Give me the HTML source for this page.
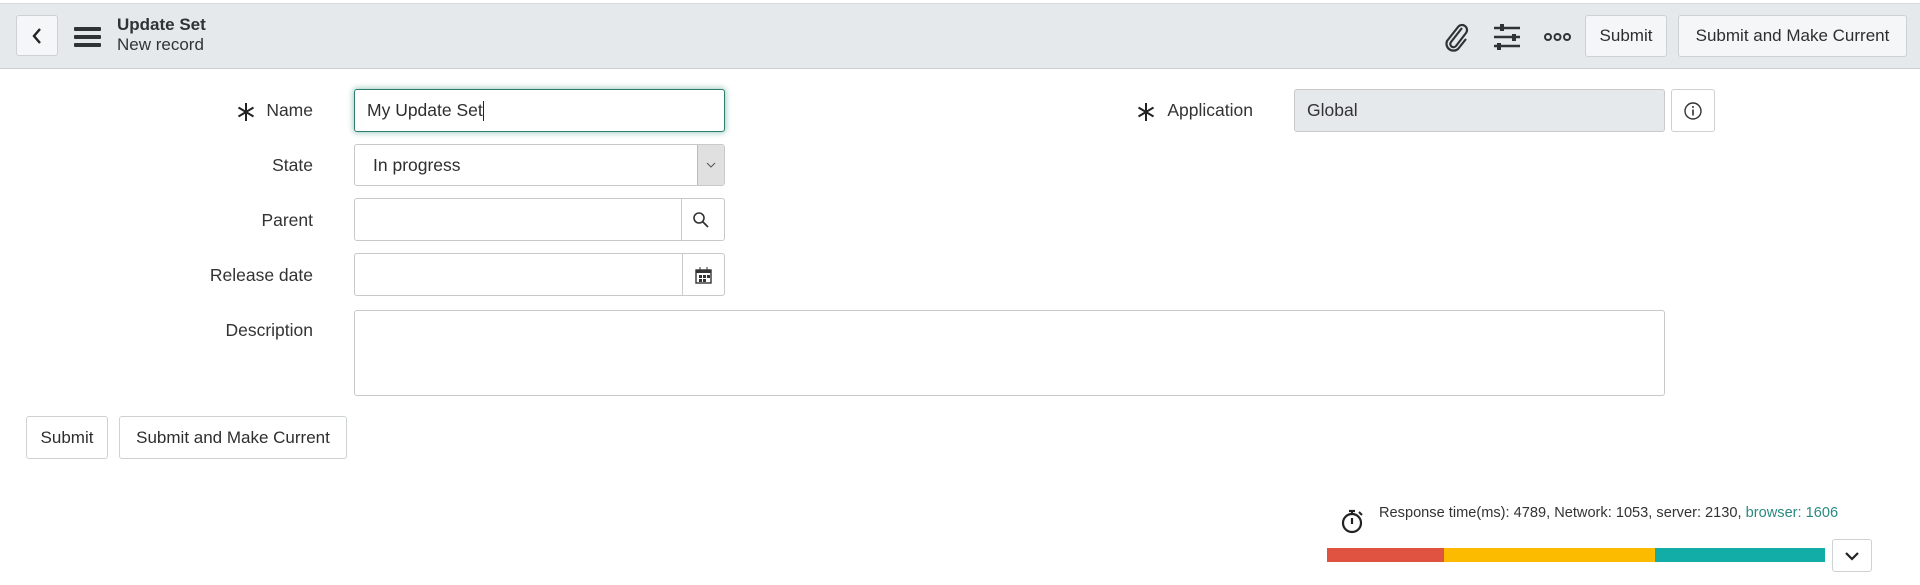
<!DOCTYPE html>
<html><head><style>
*{box-sizing:border-box;margin:0;padding:0}
body{width:1920px;height:585px;background:#fff;font-family:"Liberation Sans",Arial,sans-serif;color:#2e2e2e;position:relative;overflow:hidden}
.a{position:absolute}
.hdr{left:0;top:3px;width:1920px;height:66px;background:#e6e9eb;border-top:1px solid #d8dbde;border-bottom:1px solid #c9cdd1}
.btn{position:absolute;background:#f5f6f7;border:1px solid #cdd1d4;border-radius:3px;font-size:17px;color:#2e2e2e;display:flex;align-items:center;justify-content:center}
.wbtn{background:#fff}
.lbl{position:absolute;font-size:17.5px;color:#333;text-align:right}
.inp{position:absolute;border:1px solid #c7c9cb;border-radius:3px;background:#fff;font-size:17.5px;display:flex;align-items:center}
</style></head><body>
<div class="a hdr"></div>
<div class="btn" style="left:16px;top:15px;width:42px;height:41px"><svg width="14" height="20" viewBox="0 0 14 20"><path d="M10 3 L4 10 L10 17" fill="none" stroke="#222" stroke-width="2.4"/></svg></div>
<div class="a" style="left:74px;top:27px;width:27px;height:4px;background:#2f3338;border-radius:1px"></div>
<div class="a" style="left:74px;top:35px;width:27px;height:4px;background:#2f3338;border-radius:1px"></div>
<div class="a" style="left:74px;top:43px;width:27px;height:4px;background:#2f3338;border-radius:1px"></div>
<div class="a" style="left:117px;top:15px;font-size:17px;font-weight:bold;color:#2f3338">Update Set</div>
<div class="a" style="left:117px;top:35px;font-size:17px;color:#2f3338">New record</div>
<svg class="a" style="left:1442px;top:22px" width="28" height="30" viewBox="0 0 28 30"><path d="M20 6 L9 20 a3 3 0 0 0 5 4 L24 11 a5 5 0 0 0-8-6 L5 19 a7 7 0 0 0 11 8 L24 17" fill="none" stroke="#2f3338" stroke-width="2.2"/></svg>
<svg class="a" style="left:1492px;top:22px" width="30" height="30" viewBox="0 0 30 30"><g stroke="#2f3338" stroke-width="2.4"><line x1="2" y1="6" x2="28" y2="6"/><line x1="2" y1="15" x2="28" y2="15"/><line x1="2" y1="24" x2="28" y2="24"/></g><rect x="8" y="2" width="4" height="7" fill="#2f3338"/><rect x="20" y="12" width="4" height="7" fill="#2f3338"/><rect x="5" y="21" width="4" height="7" fill="#2f3338"/></svg>
<svg class="a" style="left:1543px;top:32px" width="29" height="10" viewBox="0 0 29 10"><g fill="none" stroke="#2f3338" stroke-width="2"><circle cx="5" cy="5" r="3"/><circle cx="14.5" cy="5" r="3"/><circle cx="24" cy="5" r="3"/></g></svg>
<div class="btn" style="left:1585px;top:15px;width:82px;height:42px">Submit</div>
<div class="btn" style="left:1678px;top:15px;width:229px;height:42px">Submit and Make Current</div>

<svg class="a" style="left:237px;top:103px" width="18" height="18" viewBox="0 0 18 18"><g stroke="#222" stroke-width="2"><line x1="9" y1="0" x2="9" y2="18"/><line x1="1.5" y1="4.5" x2="16.5" y2="13.5"/><line x1="1.5" y1="13.5" x2="16.5" y2="4.5"/></g></svg>
<div class="lbl" style="left:200px;top:100px;width:113px">Name</div>
<div class="inp" style="left:354px;top:89px;width:371px;height:43px;border:1px solid #2e7d6e;box-shadow:0 0 6px 1px rgba(40,140,120,.45);padding-left:12px">My Update Set<span style="display:inline-block;width:1px;height:20px;background:#222"></span></div>

<div class="lbl" style="left:200px;top:155px;width:113px">State</div>
<div class="inp" style="left:354px;top:144px;width:371px;height:42px;padding-left:18px">In progress<div class="a" style="right:0;top:0;width:27px;height:40px;background:#e0e0e0;border-left:1px solid #bbb;display:flex;align-items:center;justify-content:center"><svg width="10" height="6"><path d="M1 1 L5 5 L9 1" fill="none" stroke="#555"/></svg></div></div>

<div class="lbl" style="left:200px;top:210px;width:113px">Parent</div>
<div class="inp" style="left:354px;top:198px;width:371px;height:43px"><div class="a" style="left:326px;top:0;width:1px;height:41px;background:#ccc"></div><svg class="a" style="left:337px;top:12px" width="18" height="18"><circle cx="7" cy="7" r="5" fill="none" stroke="#333" stroke-width="1.6"/><path d="M11 11 L16 16" stroke="#333" stroke-width="1.8"/></svg></div>

<div class="lbl" style="left:150px;top:265px;width:163px">Release date</div>
<div class="inp" style="left:354px;top:253px;width:371px;height:43px"><div class="a" style="left:327px;top:0;width:1px;height:41px;background:#ccc"></div><svg class="a" style="left:340px;top:13px" width="17" height="17"><rect x="1" y="3" width="15" height="13" fill="none" stroke="#333" stroke-width="1.4"/><rect x="1" y="3" width="15" height="3" fill="#333"/><rect x="4" y="8" width="3" height="3" fill="#333"/><rect x="8" y="8" width="3" height="3" fill="#333"/><rect x="12" y="8" width="3" height="3" fill="#333"/><rect x="4" y="12" width="3" height="3" fill="#333"/><rect x="8" y="12" width="3" height="3" fill="#333"/><line x1="5" y1="0" x2="5" y2="3" stroke="#333"/><line x1="12" y1="0" x2="12" y2="3" stroke="#333"/></svg></div>

<div class="lbl" style="left:150px;top:320px;width:163px">Description</div>
<div class="inp" style="left:354px;top:310px;width:1311px;height:86px"></div>

<div class="btn wbtn" style="left:26px;top:416px;width:82px;height:43px">Submit</div>
<div class="btn wbtn" style="left:119px;top:416px;width:228px;height:43px">Submit and Make Current</div>

<svg class="a" style="left:1137px;top:103px" width="18" height="18" viewBox="0 0 18 18"><g stroke="#222" stroke-width="2"><line x1="9" y1="0" x2="9" y2="18"/><line x1="1.5" y1="4.5" x2="16.5" y2="13.5"/><line x1="1.5" y1="13.5" x2="16.5" y2="4.5"/></g></svg>
<div class="lbl" style="left:1150px;top:100px;width:103px">Application</div>
<div class="inp" style="left:1294px;top:89px;width:371px;height:43px;background:#e6e9eb;padding-left:12px;color:#333">Global</div>
<div class="btn wbtn" style="left:1671px;top:89px;width:44px;height:43px"><svg width="20" height="20"><circle cx="10" cy="10" r="8" fill="none" stroke="#333" stroke-width="1.4"/><rect x="9.2" y="8.5" width="1.6" height="6" fill="#333"/><circle cx="10" cy="6" r="1" fill="#333"/></svg></div>

<svg class="a" style="left:1341px;top:507px" width="24" height="28" viewBox="0 0 24 28"><circle cx="11" cy="16" r="9" fill="none" stroke="#222" stroke-width="2.2"/><line x1="11" y1="11" x2="11" y2="17" stroke="#222" stroke-width="2.2"/><line x1="8" y1="4" x2="14" y2="4" stroke="#222" stroke-width="2.2"/><line x1="11" y1="4" x2="11" y2="7" stroke="#222" stroke-width="2"/><path d="M18 5 L21 8" stroke="#222" stroke-width="2"/></svg>
<div class="a" style="left:1379px;top:505px;font-size:14.6px;color:#333">Response time(ms): 4789, Network: 1053, server: 2130, <span style="color:#2b8a80">browser: 1606</span></div>
<div class="a" style="left:1327px;top:548px;width:117px;height:14px;background:#e05340"></div>
<div class="a" style="left:1444px;top:548px;width:211px;height:14px;background:#fdbb00"></div>
<div class="a" style="left:1655px;top:548px;width:170px;height:14px;background:#12ada6"></div>
<div class="btn wbtn" style="left:1832px;top:539px;width:40px;height:33px"><svg width="16" height="10"><path d="M2 2 L8 8 L14 2" fill="none" stroke="#222" stroke-width="2.2"/></svg></div>
</body></html>
